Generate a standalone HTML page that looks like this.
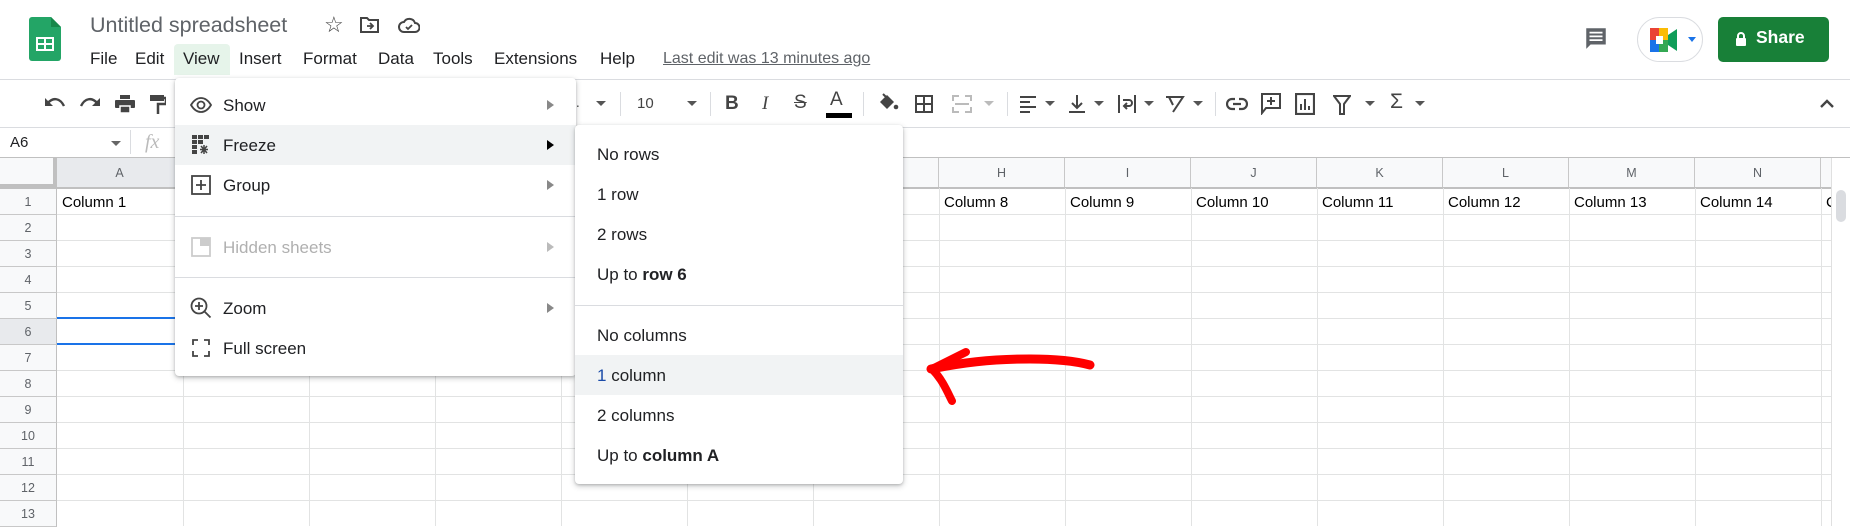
<!DOCTYPE html>
<html><head><meta charset="utf-8"><style>
*{margin:0;padding:0;box-sizing:border-box}
body{width:1850px;height:526px;overflow:hidden;background:#fff;font-family:"Liberation Sans",Arial,sans-serif;color:#202124;position:relative}
.a{position:absolute}
.t{position:absolute;white-space:nowrap}
.tb{position:absolute;top:93px;font-size:18px;color:#444;text-align:center;width:24px}
.dd{position:absolute;top:101px;width:0;height:0;border-left:5px solid transparent;border-right:5px solid transparent;border-top:5px solid #555}
.sep{position:absolute;top:92px;width:1px;height:24px;background:#dadce0}
.vl{position:absolute;top:188px;width:1px;height:338px;background:#e2e3e3}
.hl{position:absolute;left:57px;width:1774px;height:1px;background:#e2e3e3}
.rh{position:absolute;left:0;width:57px;height:26px;font-size:12.5px;color:#5f6368;text-align:center;line-height:26px;background:#f8f9fa;border-bottom:1px solid #c8c8c8;border-right:1px solid #c0c0c0}
.ch{position:absolute;top:158px;height:30px;width:126px;font-size:12.5px;color:#5f6368;text-align:center;line-height:30px;border-right:1px solid #c8c8c8}
.cell{position:absolute;top:194px;font-size:15px;color:#000}
.mi{position:absolute;font-size:17px;color:#202124}
.arr{position:absolute;width:0;height:0;border-top:5px solid transparent;border-bottom:5px solid transparent;border-left:7px solid #757575}
</style></head><body>

<!-- header -->
<svg class="a" style="left:29px;top:17px" width="32" height="44" viewBox="0 0 32 44"><path d="M3 0h19l10 10v31a3 3 0 0 1-3 3H3a3 3 0 0 1-3-3V3a3 3 0 0 1 3-3z" fill="#23a566"/><path d="M22 0l10 10H22z" fill="#16884a"/><rect x="7" y="20" width="18" height="14" fill="#fff"/><rect x="9" y="22" width="6" height="4" fill="#23a566"/><rect x="17" y="22" width="6" height="4" fill="#23a566"/><rect x="9" y="28" width="6" height="4" fill="#23a566"/><rect x="17" y="28" width="6" height="4" fill="#23a566"/></svg>
<div class="t" style="left:90px;top:13px;font-size:21.5px;color:#5f6368">Untitled spreadsheet</div>
<div class="t" style="left:324px;top:12px;font-size:22px;color:#444">☆</div>
<svg class="a" style="left:360px;top:16px" width="20" height="18" viewBox="0 0 20 18"><path d="M1 2h6l2 2h9v12H1z" fill="none" stroke="#444" stroke-width="2"/><path d="M7 10h6M10 7l3 3-3 3" fill="none" stroke="#444" stroke-width="1.8"/></svg>
<svg class="a" style="left:398px;top:16px" width="22" height="18" viewBox="0 0 22 18"><path d="M6 16a5 5 0 0 1 0-10 6 6 0 0 1 11 1 4.5 4.5 0 0 1 0 9z" fill="none" stroke="#444" stroke-width="2"/><path d="M8 11l2 2 4-4" fill="none" stroke="#444" stroke-width="1.8"/></svg>
<div class="a" style="left:174px;top:44px;width:56px;height:31px;background:#e6f4ea;border-radius:4px 4px 0 0"></div>
<div class="t" style="left:90px;top:49px;font-size:17px">File</div>
<div class="t" style="left:135px;top:49px;font-size:17px">Edit</div>
<div class="t" style="left:183px;top:49px;font-size:17px">View</div>
<div class="t" style="left:239px;top:49px;font-size:17px">Insert</div>
<div class="t" style="left:303px;top:49px;font-size:17px">Format</div>
<div class="t" style="left:378px;top:49px;font-size:17px">Data</div>
<div class="t" style="left:433px;top:49px;font-size:17px">Tools</div>
<div class="t" style="left:494px;top:49px;font-size:17px">Extensions</div>
<div class="t" style="left:600px;top:49px;font-size:17px">Help</div>
<div class="t" style="left:663px;top:50px;font-size:16px;color:#5f6368;text-decoration:underline">Last edit was 13 minutes ago</div>

<svg class="a" style="left:1583px;top:25px" width="26" height="26" viewBox="0 0 24 24"><path d="M3 3h18v15H7l-4 4z" fill="#5f6368"/><path d="M6 7h12M6 10.5h12M6 14h12" stroke="#fff" stroke-width="1.6"/></svg>
<div class="a" style="left:1637px;top:17px;width:66px;height:45px;border:1px solid #dadce0;border-radius:23px"></div>
<svg class="a" style="left:1649px;top:27px" width="32" height="26" viewBox="0 0 32 26"><rect x="1" y="1" width="9" height="12" fill="#ea4335"/><rect x="10" y="1" width="9" height="12" fill="#fbbc04"/><rect x="1" y="13" width="9" height="12" fill="#1a73e8"/><rect x="10" y="13" width="9" height="12" fill="#34a853"/><path d="M19 8l9-6v22l-9-6z" fill="#0f9d58"/><rect x="7" y="9" width="7" height="8" fill="#fff"/></svg>
<div class="a" style="left:1688px;top:37px;border-left:4px solid transparent;border-right:4px solid transparent;border-top:5px solid #1a73e8"></div>
<div class="a" style="left:1718px;top:17px;width:111px;height:45px;background:#188038;border-radius:5px"></div>
<svg class="a" style="left:1735px;top:31px" width="12" height="16" viewBox="0 0 12 16"><path d="M3 7V5a3 3 0 0 1 6 0v2" fill="none" stroke="#fff" stroke-width="2"/><rect x="1" y="7" width="10" height="8" rx="1" fill="#fff"/></svg>
<div class="t" style="left:1756px;top:27px;font-size:17.5px;font-weight:bold;color:#fff">Share</div>

<div class="a" style="left:0;top:79px;width:1850px;height:1px;background:#dadce0"></div>

<!-- toolbar -->
<svg class="a" style="left:44px;top:96px" width="22" height="14" viewBox="0 0 22 14"><path d="M4 7c5-6 12-5 16 3" fill="none" stroke="#444" stroke-width="2.4"/><path d="M1 2v8h8z" fill="#444"/></svg>
<svg class="a" style="left:79px;top:96px" width="22" height="14" viewBox="0 0 22 14"><path d="M18 7C13 1 6 2 2 10" fill="none" stroke="#444" stroke-width="2.4"/><path d="M21 2v8h-8z" fill="#444"/></svg>
<svg class="a" style="left:115px;top:95px" width="20" height="18" viewBox="0 0 20 18"><rect x="5" y="0" width="10" height="4" fill="#444"/><rect x="0" y="5" width="20" height="8" rx="1" fill="#444"/><rect x="5" y="11" width="10" height="7" fill="#444" stroke="#fff" stroke-width="1.5"/></svg>
<svg class="a" style="left:150px;top:95px" width="16" height="20" viewBox="0 0 16 20"><rect x="0" y="0" width="14" height="6" fill="#444"/><path d="M14 3h2v6H8v10" fill="none" stroke="#444" stroke-width="2.5"/></svg>
<div class="t" style="left:572px;top:94px;font-size:14px;color:#444">..</div>
<div class="dd" style="left:596px"></div>
<div class="sep" style="left:620px"></div>
<div class="t" style="left:637px;top:95px;font-size:15px;color:#444">10</div>
<div class="dd" style="left:687px"></div>
<div class="sep" style="left:710px"></div>
<div class="t" style="left:725px;top:93px;font-size:19px;font-weight:bold;color:#444">B</div>
<div class="t" style="left:762px;top:93px;font-size:19px;font-style:italic;color:#444;font-family:'Liberation Serif',serif">I</div>
<div class="t" style="left:794px;top:92px;font-size:19px;color:#444;text-decoration:line-through">S</div>
<div class="t" style="left:830px;top:89px;font-size:19px;color:#444">A</div>
<div class="a" style="left:826px;top:113px;width:26px;height:5px;background:#000"></div>
<div class="sep" style="left:863px"></div>
<svg class="a" style="left:877px;top:93px" width="22" height="20" viewBox="0 0 22 20"><path d="M3 9l7-7 7 7-7 7z" fill="#444"/><path d="M6 1l4 4" stroke="#444" stroke-width="2"/><circle cx="19" cy="14" r="2.3" fill="#444"/></svg>
<svg class="a" style="left:915px;top:95px" width="18" height="18" viewBox="0 0 18 18"><rect x="1" y="1" width="16" height="16" fill="none" stroke="#444" stroke-width="2"/><path d="M9 1v16M1 9h16" stroke="#444" stroke-width="2"/></svg>
<svg class="a" style="left:952px;top:95px" width="20" height="18" viewBox="0 0 20 18"><path d="M1 6V1h6M13 1h6v5M19 12v5h-6M7 17H1v-5M3 9h14" fill="none" stroke="#bbb" stroke-width="2"/></svg>
<div class="dd" style="left:984px;border-top-color:#bbb"></div>
<div class="sep" style="left:1007px"></div>
<svg class="a" style="left:1019px;top:95px" width="18" height="18" viewBox="0 0 18 18"><path d="M1 2h16M1 7h10M1 12h16M1 17h10" stroke="#444" stroke-width="2"/></svg>
<div class="dd" style="left:1045px"></div>
<svg class="a" style="left:1068px;top:94px" width="18" height="20" viewBox="0 0 18 20"><path d="M9 1v12M4 9l5 5 5-5M1 18h16" fill="none" stroke="#444" stroke-width="2"/></svg>
<div class="dd" style="left:1094px"></div>
<svg class="a" style="left:1117px;top:94px" width="20" height="20" viewBox="0 0 20 20"><path d="M2 1v18M18 1v18M6 6h6a3 3 0 0 1 0 6H8M10 9l-3 3 3 3" fill="none" stroke="#444" stroke-width="2"/></svg>
<div class="dd" style="left:1144px"></div>
<svg class="a" style="left:1165px;top:94px" width="20" height="20" viewBox="0 0 20 20"><path d="M1 3h17L8 18M4 3l4 8" fill="none" stroke="#444" stroke-width="2"/></svg>
<div class="dd" style="left:1193px"></div>
<div class="sep" style="left:1215px"></div>
<svg class="a" style="left:1226px;top:97px" width="22" height="14" viewBox="0 0 22 14"><path d="M9 2H6a5 5 0 0 0 0 10h3M13 2h3a5 5 0 0 1 0 10h-3M7 7h8" fill="none" stroke="#444" stroke-width="2.2"/></svg>
<svg class="a" style="left:1261px;top:93px" width="20" height="22" viewBox="0 0 20 22"><path d="M1 1h18v14H5l-4 5z" fill="none" stroke="#444" stroke-width="2"/><path d="M10 4v8M6 8h8" stroke="#444" stroke-width="2"/></svg>
<svg class="a" style="left:1295px;top:93px" width="20" height="22" viewBox="0 0 20 22"><rect x="1" y="1" width="18" height="20" fill="none" stroke="#444" stroke-width="2.2"/><path d="M6 17V11M10 17V6M14 17v-4" stroke="#444" stroke-width="2"/></svg>
<svg class="a" style="left:1333px;top:95px" width="18" height="20" viewBox="0 0 18 20"><path d="M1 1h16l-6 8v10H7V9z" fill="none" stroke="#444" stroke-width="2"/></svg>
<div class="dd" style="left:1365px"></div>
<div class="t" style="left:1390px;top:90px;font-size:21px;color:#444">Σ</div>
<div class="dd" style="left:1415px"></div>
<svg class="a" style="left:1819px;top:98px" width="16" height="10" viewBox="0 0 16 10"><path d="M2 9l6-6 6 6" fill="none" stroke="#444" stroke-width="2.4"/></svg>

<div class="a" style="left:0;top:127px;width:1850px;height:1px;background:#dadce0"></div>

<!-- formula bar -->
<div class="t" style="left:10px;top:134px;font-size:15px">A6</div>
<div class="dd" style="left:111px;top:141px;border-top-color:#666"></div>
<div class="a" style="left:130px;top:130px;width:1px;height:24px;background:#dadce0"></div>
<div class="t" style="left:145px;top:131px;font-size:20px;font-style:italic;color:#bbb;font-family:'Liberation Serif',serif">fx</div>
<div class="a" style="left:0;top:157px;width:1850px;height:1px;background:#c0c0c0"></div>

<!-- grid -->
<div class="a" style="left:0;top:158px;width:57px;height:30px;background:#f8f9fa;border-right:4px solid #c0c0c0;border-bottom:4px solid #c0c0c0"></div>
<div class="a" style="left:57px;top:158px;width:1774px;height:30px;background:#f8f9fa"></div>
<div class="ch" style="left:57px;background:#e8eaed">A</div>
<div class="ch" style="left:183px">B</div><div class="ch" style="left:309px">C</div><div class="ch" style="left:435px">D</div><div class="ch" style="left:561px">E</div><div class="ch" style="left:687px">F</div><div class="ch" style="left:813px">G</div>
<div class="ch" style="left:939px">H</div><div class="ch" style="left:1065px">I</div><div class="ch" style="left:1191px">J</div><div class="ch" style="left:1317px">K</div><div class="ch" style="left:1443px">L</div><div class="ch" style="left:1569px">M</div><div class="ch" style="left:1695px">N</div><div class="ch" style="left:1821px">O</div>
<div class="a" style="left:0;top:187px;width:1831px;height:2px;background:#c0c0c0"></div>

<div class="vl" style="left:183px"></div><div class="vl" style="left:309px"></div><div class="vl" style="left:435px"></div><div class="vl" style="left:561px"></div><div class="vl" style="left:687px"></div><div class="vl" style="left:813px"></div><div class="vl" style="left:939px"></div><div class="vl" style="left:1065px"></div><div class="vl" style="left:1191px"></div><div class="vl" style="left:1317px"></div><div class="vl" style="left:1443px"></div><div class="vl" style="left:1569px"></div><div class="vl" style="left:1695px"></div><div class="vl" style="left:1821px"></div>
<div class="hl" style="top:214px"></div><div class="hl" style="top:240px"></div><div class="hl" style="top:266px"></div><div class="hl" style="top:292px"></div><div class="hl" style="top:318px"></div><div class="hl" style="top:344px"></div><div class="hl" style="top:370px"></div><div class="hl" style="top:396px"></div><div class="hl" style="top:422px"></div><div class="hl" style="top:448px"></div><div class="hl" style="top:474px"></div><div class="hl" style="top:500px"></div>

<div class="rh" style="top:189px">1</div><div class="rh" style="top:215px">2</div><div class="rh" style="top:241px">3</div><div class="rh" style="top:267px">4</div><div class="rh" style="top:293px">5</div><div class="rh" style="top:319px;background:#e8eaed">6</div><div class="rh" style="top:345px">7</div><div class="rh" style="top:371px">8</div><div class="rh" style="top:397px">9</div><div class="rh" style="top:423px">10</div><div class="rh" style="top:449px">11</div><div class="rh" style="top:475px">12</div><div class="rh" style="top:501px">13</div>

<div class="cell" style="left:62px">Column 1</div>
<div class="cell" style="left:944px">Column 8</div><div class="cell" style="left:1070px">Column 9</div><div class="cell" style="left:1196px">Column 10</div><div class="cell" style="left:1322px">Column 11</div><div class="cell" style="left:1448px">Column 12</div><div class="cell" style="left:1574px">Column 13</div><div class="cell" style="left:1700px">Column 14</div><div class="cell" style="left:1826px">C</div>

<div class="a" style="left:57px;top:317px;width:126px;height:2px;background:#1a73e8"></div>
<div class="a" style="left:57px;top:343px;width:126px;height:2px;background:#1a73e8"></div>

<div class="a" style="left:1831px;top:158px;width:19px;height:368px;background:#fff;border-left:1px solid #e0e0e0"></div>
<div class="a" style="left:1836px;top:190px;width:10px;height:32px;background:#dadce0;border-radius:5px"></div>

<!-- View menu -->
<div class="a" style="left:175px;top:78px;width:401px;height:298px;background:#fff;border-radius:4px;box-shadow:0 2px 6px rgba(60,64,67,.3),0 1px 2px rgba(60,64,67,.2)"></div>
<div class="a" style="left:175px;top:125px;width:401px;height:40px;background:#f1f3f4"></div>
<svg class="a" style="left:190px;top:97px" width="22" height="16" viewBox="0 0 22 16"><path d="M1 8C4 3 7 1 11 1s7 2 10 7c-3 5-6 7-10 7S4 13 1 8z" fill="none" stroke="#444" stroke-width="1.8"/><circle cx="11" cy="8" r="3.5" fill="none" stroke="#444" stroke-width="1.8"/></svg>
<div class="mi" style="left:223px;top:96px">Show</div>
<svg class="a" style="left:192px;top:135px" width="18" height="20" viewBox="0 0 18 20"><g fill="#444"><rect x="0" y="0" width="5" height="4"/><rect x="6" y="0" width="5" height="4"/><rect x="12" y="0" width="5" height="4"/><rect x="0" y="5" width="5" height="4"/><rect x="6" y="5" width="5" height="4"/><rect x="0" y="10" width="5" height="4"/><rect x="0" y="15" width="5" height="4"/></g><path d="M12 10v9M8 14.5h8M9 11l6 7M15 11l-6 7" stroke="#444" stroke-width="1.5"/></svg>
<div class="mi" style="left:223px;top:136px">Freeze</div>
<svg class="a" style="left:191px;top:175px" width="20" height="20" viewBox="0 0 20 20"><rect x="1" y="1" width="18" height="18" fill="none" stroke="#444" stroke-width="1.8"/><path d="M10 5v10M5 10h10" stroke="#444" stroke-width="1.8"/></svg>
<div class="mi" style="left:223px;top:176px">Group</div>
<div class="a" style="left:175px;top:216px;width:401px;height:1px;background:#dadce0"></div>
<svg class="a" style="left:191px;top:237px" width="20" height="20" viewBox="0 0 20 20"><rect x="1" y="1" width="18" height="18" fill="none" stroke="#ccc" stroke-width="1.8"/><rect x="9" y="1" width="10" height="8" fill="#ccc"/></svg>
<div class="mi" style="left:223px;top:238px;color:#b0b0b0">Hidden sheets</div>
<div class="a" style="left:175px;top:277px;width:401px;height:1px;background:#dadce0"></div>
<svg class="a" style="left:190px;top:297px" width="22" height="22" viewBox="0 0 22 22"><circle cx="9" cy="9" r="7.5" fill="none" stroke="#444" stroke-width="1.8"/><path d="M14.5 14.5l6 6M9 5v8M5 9h8" stroke="#444" stroke-width="1.8"/></svg>
<div class="mi" style="left:223px;top:299px">Zoom</div>
<svg class="a" style="left:192px;top:339px" width="18" height="18" viewBox="0 0 18 18"><path d="M1 6V1h5M12 1h5v5M17 12v5h-5M6 17H1v-5" fill="none" stroke="#444" stroke-width="1.8"/></svg>
<div class="mi" style="left:223px;top:339px">Full screen</div>
<div class="arr" style="left:547px;top:100px;border-left-color:#888"></div>
<div class="arr" style="left:547px;top:140px;border-left-color:#000"></div>
<div class="arr" style="left:547px;top:180px;border-left-color:#888"></div>
<div class="arr" style="left:547px;top:242px;border-left-color:#bbb"></div>
<div class="arr" style="left:547px;top:303px;border-left-color:#888"></div>

<!-- Freeze submenu -->
<div class="a" style="left:575px;top:125px;width:328px;height:359px;background:#fff;border-radius:4px;box-shadow:0 2px 6px rgba(60,64,67,.3),0 1px 2px rgba(60,64,67,.2)"></div>
<div class="mi" style="left:597px;top:145px">No rows</div>
<div class="mi" style="left:597px;top:185px">1 row</div>
<div class="mi" style="left:597px;top:225px">2 rows</div>
<div class="mi" style="left:597px;top:265px">Up to <b>row 6</b></div>
<div class="a" style="left:575px;top:305px;width:328px;height:1px;background:#dadce0"></div>
<div class="mi" style="left:597px;top:326px">No columns</div>
<div class="a" style="left:575px;top:355px;width:328px;height:40px;background:#f1f3f4"></div>
<div class="mi" style="left:597px;top:366px"><span style="color:#1a4ba8">1</span> column</div>
<div class="mi" style="left:597px;top:406px">2 columns</div>
<div class="mi" style="left:597px;top:446px">Up to <b>column A</b></div>

<!-- red arrow -->
<svg class="a" style="left:920px;top:345px" width="180" height="60" viewBox="0 0 180 60"><path d="M11 24C40 18 70 14 110 14c25 0 45 2 60 6" fill="none" stroke="#f00" stroke-width="9" stroke-linecap="round"/><path d="M46 7L12 24c10 10 15 22 20 32" fill="none" stroke="#f00" stroke-width="8" stroke-linecap="round" stroke-linejoin="round"/></svg>

</body></html>
